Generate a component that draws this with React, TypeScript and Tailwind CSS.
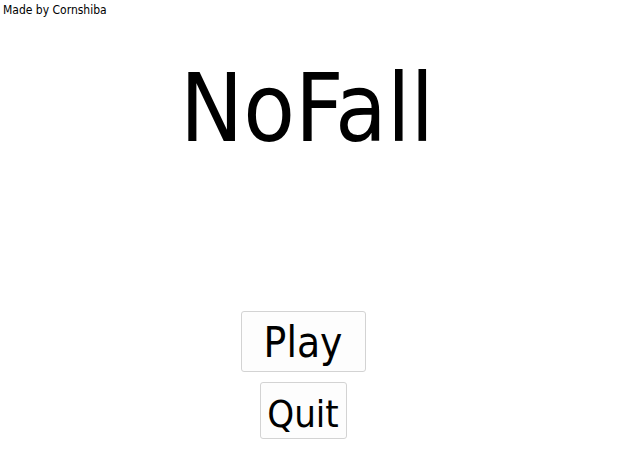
import React from 'react';

const font = "font-['DejaVu_Sans_Condensed','DejaVu_Sans',sans-serif]";

const App: React.FC = () => {
  return (
    <div className={`w-[635px] h-[476px] bg-white text-black ${font}`}>
      <p className="pl-[3px] pt-[2px] text-[12px] leading-[16px]">Made by Cornshiba</p>

      <div className="w-[614px] flex justify-center">
        <h1 className="mt-[44px] text-[94px] leading-none font-normal">NoFall</h1>
      </div>

      {/* menu buttons */}
      <div className="w-[606px] mt-[155px] flex flex-col items-center gap-[10px]">
        <button className="w-[125px] h-[61px] flex items-center justify-center pt-[2px] bg-[#fdfdfd] border border-[#d3d3d3] rounded-[3px] text-[42px] leading-none">
          Play
        </button>
        <button className="w-[87px] h-[57px] flex items-center justify-center pt-[7px] bg-[#fdfdfd] border border-[#d3d3d3] rounded-[3px] text-[38px] leading-none">
          Quit
        </button>
      </div>
    </div>
  );
};

export default App;
